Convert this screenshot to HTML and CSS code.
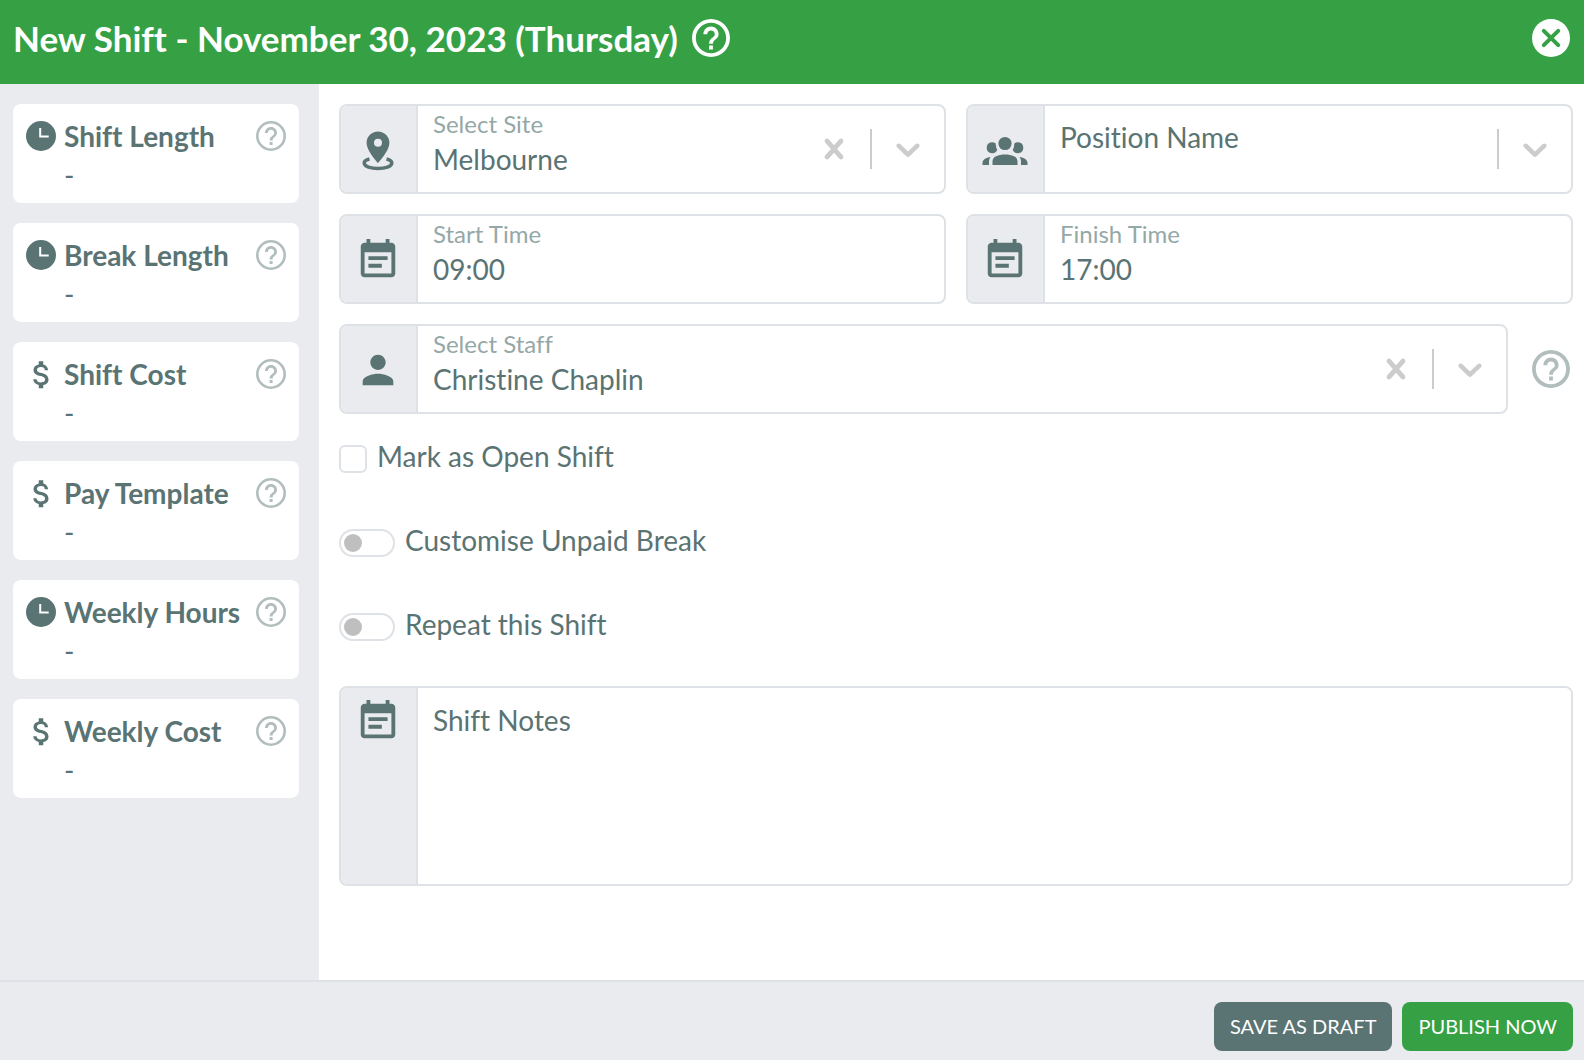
FILE: index.html
```html
<!DOCTYPE html>
<html lang="en">
<head>
  <meta charset="UTF-8" />
  <title>New Shift</title>
  <meta name="viewport" content="width=device-width, initial-scale=1.0">
  <link rel="stylesheet" href="styles.css">
</head>
<body>
  <!-- shared icons -->
  <svg class="sprite" aria-hidden="true">
    <symbol id="i-help" viewBox="2 2 20 20"><path d="M11 18h2v-2h-2v2zm1-16C6.48 2 2 6.48 2 12s4.48 10 10 10 10-4.48 10-10S17.52 2 12 2zm0 18c-4.41 0-8-3.59-8-8s3.59-8 8-8 8 3.59 8 8-3.59 8-8 8zm0-14c-2.21 0-4 1.79-4 4h2c0-1.1.9-2 2-2s2 .9 2 2c0 2-3 1.75-3 5h2c0-2.25 3-2.5 3-5 0-2.21-1.79-4-4-4z"/></symbol>
    <symbol id="i-help-thin" viewBox="0 0 30 30"><circle cx="15" cy="15" r="13.7" fill="none" stroke="currentColor" stroke-width="2.6"/><path d="M13.6 21h3v3h-3zM15 6c-3.3 0-6 2.6-6 5.9h2.8c0-1.7 1.4-3.1 3.2-3.1s3.2 1.4 3.2 3.1c0 3-4.6 2.8-4.6 7.6h3c0-3.5 4.4-3.8 4.4-7.6C21 8.6 18.3 6 15 6z"/></symbol>
    <symbol id="i-clock" viewBox="0 0 30 30"><circle cx="15" cy="15" r="15"/><path d="M14.2 7v8.5h8.5" fill="none" stroke="#fff" stroke-width="2"/></symbol>
    <symbol id="i-dollar" viewBox="1.5 1.5 20 20"><path d="M11.8 10.9c-2.27-.59-3-1.2-3-2.15 0-1.09 1.01-1.85 2.7-1.85 1.78 0 2.44.85 2.5 2.1h2.21c-.07-1.72-1.12-3.3-3.21-3.81V3h-3v2.16c-1.94.42-3.5 1.68-3.5 3.61 0 2.31 1.91 3.46 4.7 4.13 2.5.6 3 1.48 3 2.41 0 .69-.49 1.79-2.7 1.79-2.06 0-2.87-.92-2.98-2.1h-2.2c.12 2.19 1.76 3.42 3.68 3.83V21h3v-2.15c1.95-.37 3.5-1.5 3.5-3.55 0-2.84-2.43-3.81-4.7-4.4z"/></symbol>
    <symbol id="i-note" viewBox="0 0 24 24"><path d="M17 10H7v2h10v-2zm2-7h-1V1h-2v2H8V1H6v2H5c-1.11 0-1.99.9-1.99 2L3 19c0 1.1.89 2 2 2h14c1.1 0 2-.9 2-2V5c0-1.1-.9-2-2-2zm0 16H5V8h14v11zm-5-5H7v2h7v-2z"/></symbol>
    <symbol id="i-person" viewBox="0 0 24 24"><path d="M12 12c2.21 0 4-1.79 4-4s-1.79-4-4-4-4 1.79-4 4 1.79 4 4 4zm0 2c-2.67 0-8 1.34-8 4v2h16v-2c0-2.66-5.33-4-8-4z"/></symbol>
    <symbol id="i-pin" viewBox="0 0 46 46"><path d="M23 4.500c-6.300 0-11.400 5-11.400 11.200C11.600 24 23 36 23 36s11.400-12 11.400-20.300C34.400 9.500 29.300 4.500 23 4.500zm0 15.200a4 4 0 1 1 0-8 4 4 0 0 1 0 8z"/><path d="M14.500 32c-3.500.8-5.300 2.200-5.300 4 0 7.200 27.600 7.200 27.600 0 0-1.800-1.800-3.200-5.300-4" fill="none" stroke="currentColor" stroke-width="3.500"/></symbol>
    <symbol id="i-group" viewBox="0 0 46 46"><circle cx="23" cy="16.500" r="6.600"/><path d="M10.500 38v-3.500c0-5 5.500-7 12.500-7s12.500 2 12.500 7V38zM9.700 15.200a5.500 5.500 0 0 1 4 1.200c.2 2.600.6 5 1.600 6.400A5.500 5.500 0 1 1 9.700 15.200zM36.300 15.200a5.500 5.500 0 0 0-4 1.200c-.2 2.600-.6 5-1.600 6.400a5.500 5.500 0 1 0 5.600-7.600zM.5 38v-2c0-3.500 3.500-5.500 8-6-1 1.300-1.500 3-1.500 5v3zM45.500 38v-2c0-3.500-3.500-5.500-8-6 1 1.300 1.500 3 1.500 5v3z"/></symbol>
    <symbol id="i-x" viewBox="0 0 20 20"><path d="M14.348 14.849c-0.469 0.469-1.229 0.469-1.697 0l-2.651-3.030-2.651 3.029c-0.469 0.469-1.229 0.469-1.697 0-0.469-0.469-0.469-1.229 0-1.697l2.758-3.15-2.759-3.152c-0.469-0.469-0.469-1.228 0-1.697s1.228-0.469 1.697 0l2.652 3.031 2.651-3.031c0.469-0.469 1.228-0.469 1.697 0s0.469 1.229 0 1.697l-2.758 3.152 2.758 3.15c0.469 0.469 0.469 1.229 0 1.698z"/></symbol>
    <symbol id="i-down" viewBox="0 0 20 20"><path d="M4.516 7.548c0.436-0.446 1.043-0.481 1.576 0l3.908 3.747 3.908-3.747c0.533-0.481 1.141-0.446 1.574 0 0.436 0.445 0.408 1.197 0 1.615-0.406 0.418-4.695 4.502-4.695 4.502-0.217 0.223-0.502 0.335-0.787 0.335s-0.57-0.112-0.789-0.335c0 0-4.287-4.084-4.695-4.502s-0.436-1.17 0-1.615z"/></symbol>
    <symbol id="i-close" viewBox="0 0 38 38"><circle cx="19" cy="19" r="19" fill="#fff"/><path d="M11.8 11.800l14.400 14.400M26.200 11.800L11.800 26.200" fill="none" stroke="#35a144" stroke-width="4" stroke-linecap="round"/></symbol>
  </svg>

  <header>
    <h1>New Shift - November 30, 2023 (Thursday)</h1>
    <button type="button" class="icon-btn" aria-label="Help"><svg><use href="#i-help"/></svg></button>
    <button type="button" class="icon-btn close" aria-label="Close"><svg><use href="#i-close"/></svg></button>
  </header>

  <div class="content">
    <aside>
      <div class="card">
        <svg><use href="#i-clock"/></svg>
        <h2>Shift Length</h2>
        <button type="button" class="icon-btn small" aria-label="About shift length"><svg><use href="#i-help-thin"/></svg></button>
        <p>-</p>
      </div>
      <div class="card">
        <svg><use href="#i-clock"/></svg>
        <h2>Break Length</h2>
        <button type="button" class="icon-btn small" aria-label="About break length"><svg><use href="#i-help-thin"/></svg></button>
        <p>-</p>
      </div>
      <div class="card">
        <svg><use href="#i-dollar"/></svg>
        <h2>Shift Cost</h2>
        <button type="button" class="icon-btn small" aria-label="About shift cost"><svg><use href="#i-help-thin"/></svg></button>
        <p>-</p>
      </div>
      <div class="card">
        <svg><use href="#i-dollar"/></svg>
        <h2>Pay Template</h2>
        <button type="button" class="icon-btn small" aria-label="About pay template"><svg><use href="#i-help-thin"/></svg></button>
        <p>-</p>
      </div>
      <div class="card">
        <svg><use href="#i-clock"/></svg>
        <h2>Weekly Hours</h2>
        <button type="button" class="icon-btn small" aria-label="About weekly hours"><svg><use href="#i-help-thin"/></svg></button>
        <p>-</p>
      </div>
      <div class="card">
        <svg><use href="#i-dollar"/></svg>
        <h2>Weekly Cost</h2>
        <button type="button" class="icon-btn small" aria-label="About weekly cost"><svg><use href="#i-help-thin"/></svg></button>
        <p>-</p>
      </div>
    </aside>

    <form id="shiftForm">
      <div class="row">
        <div class="field">
          <span class="addon"><svg><use href="#i-pin"/></svg></span>
          <div class="control">
            <label for="site">Select Site</label>
            <select id="site"><option>Melbourne</option></select>
          </div>
          <button type="button" class="indicator" aria-label="Clear site"><svg><use href="#i-x"/></svg></button>
          <span class="separator"></span>
          <span class="indicator"><svg><use href="#i-down"/></svg></span>
        </div>
        <div class="field">
          <span class="addon"><svg><use href="#i-group"/></svg></span>
          <div class="control empty">
            <select id="position" aria-label="Position Name"><option>Position Name</option></select>
          </div>
          <span class="separator"></span>
          <span class="indicator"><svg><use href="#i-down"/></svg></span>
        </div>
      </div>

      <div class="row">
        <div class="field">
          <span class="addon"><svg><use href="#i-note"/></svg></span>
          <div class="control">
            <label for="start">Start Time</label>
            <input type="text" id="start" value="09:00">
          </div>
        </div>
        <div class="field">
          <span class="addon"><svg><use href="#i-note"/></svg></span>
          <div class="control">
            <label for="finish">Finish Time</label>
            <input type="text" id="finish" value="17:00">
          </div>
        </div>
      </div>

      <div class="row staff">
        <div class="field">
          <span class="addon"><svg><use href="#i-person"/></svg></span>
          <div class="control">
            <label for="staff">Select Staff</label>
            <select id="staff"><option>Christine Chaplin</option></select>
          </div>
          <button type="button" class="indicator" aria-label="Clear staff"><svg><use href="#i-x"/></svg></button>
          <span class="separator"></span>
          <span class="indicator"><svg><use href="#i-down"/></svg></span>
        </div>
        <button type="button" class="icon-btn muted" aria-label="About staff"><svg><use href="#i-help"/></svg></button>
      </div>

      <div class="check">
        <input type="checkbox" id="openShift">
        <label for="openShift">Mark as Open Shift</label>
      </div>
      <div class="check">
        <input type="checkbox" class="switch" id="unpaidBreak">
        <label for="unpaidBreak">Customise Unpaid Break</label>
      </div>
      <div class="check">
        <input type="checkbox" class="switch" id="repeatShift">
        <label for="repeatShift">Repeat this Shift</label>
      </div>

      <div class="field notes">
        <span class="addon"><svg><use href="#i-note"/></svg></span>
        <textarea id="notes" placeholder="Shift Notes" aria-label="Shift Notes"></textarea>
      </div>
    </form>
  </div>

  <footer>
    <button type="button" class="btn draft">SAVE AS DRAFT</button>
    <button type="submit" form="shiftForm" class="btn">PUBLISH NOW</button>
  </footer>
</body>
</html>
```
FILE: styles.css
```css
* {
  box-sizing: border-box;
}
body {
  font-family: Lato, "Liberation Sans", sans-serif;
  font-size: 28px;
  line-height: 36px;
  font-variant-ligatures: none;
  color: #5a7373;
  background: white;
  margin: 0;
  min-height: 100vh;
  display: flex;
  flex-direction: column;
}
svg {
  display: block;
  fill: currentColor;
}
.sprite {
  position: absolute;
  width: 0;
  height: 0;
}
h1, h2, p {
  margin: 0;
}
button, input, select, textarea {
  font: inherit;
  font-variant-ligatures: none;
  color: inherit;
}

header {
  background: #35a144;
  color: white;
  height: 84px;
  padding: 0 14px 8px 13px;
  display: flex;
  align-items: center;
  gap: 14px;
}
h1 {
  font-size: 35px;
  font-weight: bold;
}
.icon-btn {
  flex: none;
  width: 38px;
  height: 38px;
  padding: 0;
  border: none;
  background: none;
  cursor: pointer;
}
.icon-btn svg {
  width: 100%;
  height: 100%;
}
.icon-btn.muted {
  color: #b2bdbd;
}
.icon-btn.small {
  width: 30px;
  height: 30px;
  color: #b2bdbd;
}
.close {
  margin-left: auto;
}

.content {
  flex: 1;
  display: flex;
}
aside {
  flex: none;
  width: 319px;
  padding: 20px 20px 20px 13px;
  background: #eaebef;
  display: flex;
  flex-direction: column;
  gap: 20px;
}
.card {
  background: white;
  border-radius: 8px;
  padding: 14px 13px 7px;
  display: grid;
  grid-template-columns: 30px 1fr 30px;
  column-gap: 8px;
  align-items: center;
}
.card > svg {
  width: 30px;
  height: 30px;
}
h2 {
  font-size: 28px;
  font-weight: bold;
  white-space: nowrap;
}
.card p {
  grid-column: 2;
  line-height: 42px;
}

form {
  flex: 1;
  padding: 20px 11px 20px 20px;
  display: flex;
  flex-direction: column;
  gap: 20px;
}
.row {
  display: flex;
  gap: 20px;
}
.row.staff {
  align-items: center;
  gap: 24px;
  padding-right: 3px;
}
.field {
  flex: 1;
  min-width: 0;
  height: 90px;
  display: flex;
  align-items: center;
  border: 2px solid #dee2e6;
  border-radius: 8px;
  overflow: hidden;
}
.addon {
  flex: none;
  width: 77px;
  align-self: stretch;
  padding: 2px 2px 0 0;
  display: flex;
  align-items: center;
  justify-content: center;
  background: #eaebef;
  border-right: 2px solid #dee2e6;
}
.addon svg {
  width: 46px;
  height: 46px;
}
.control {
  flex: 1;
  min-width: 0;
  align-self: stretch;
  padding: 3px 0 0 15px;
  display: flex;
  flex-direction: column;
}
.control.empty {
  padding-top: 11px;
}
.control label {
  font-size: 24px;
  line-height: 30px;
  color: #94a8a7;
}
.control input, .control select {
  width: 100%;
  height: 40px;
  padding: 0;
  border: none;
  outline: none;
  background: none;
  appearance: none;
}
.indicator {
  flex: none;
  width: 72px;
  padding: 16px;
  border: none;
  background: none;
  color: #ccc;
}
.indicator svg {
  width: 40px;
  height: 40px;
}
.separator {
  width: 2px;
  height: 40px;
  background: #ccc;
}
button.indicator {
  cursor: pointer;
}

.check {
  height: 64px;
  padding-top: 11px;
  display: flex;
  gap: 10px;
}
.check input {
  flex: none;
  appearance: none;
  width: 28px;
  height: 28px;
  margin: 0;
  border: 2px solid #dee2e6;
  border-radius: 6px;
  background: white;
}
.check label {
  line-height: 22px;
}
.check .switch {
  width: 56px;
  border-radius: 14px;
  padding: 3px;
}
.switch::before {
  content: "";
  display: block;
  width: 18px;
  height: 18px;
  border-radius: 50%;
  background: #bfbfbf;
}
.check input:checked {
  background: #35a144;
}

.field.notes {
  flex: none;
  height: 200px;
}
.notes .addon {
  align-items: flex-start;
  padding-top: 10px;
}
.notes textarea {
  flex: 1;
  align-self: stretch;
  padding: 14px 15px;
  border: none;
  outline: none;
  resize: none;
}
.notes textarea::placeholder {
  color: #5a7373;
}

footer {
  border-top: 2px solid #dee2e6;
  background: #eaebef;
  padding: 20px 11px 9px;
  display: flex;
  justify-content: flex-end;
  gap: 10px;
}
.btn {
  font-size: 20px;
  line-height: 49px;
  padding: 0 16px;
  border: none;
  border-radius: 8px;
  background: #35a144;
  color: white;
  cursor: pointer;
}
.draft {
  background: #5a7373;
}
```
